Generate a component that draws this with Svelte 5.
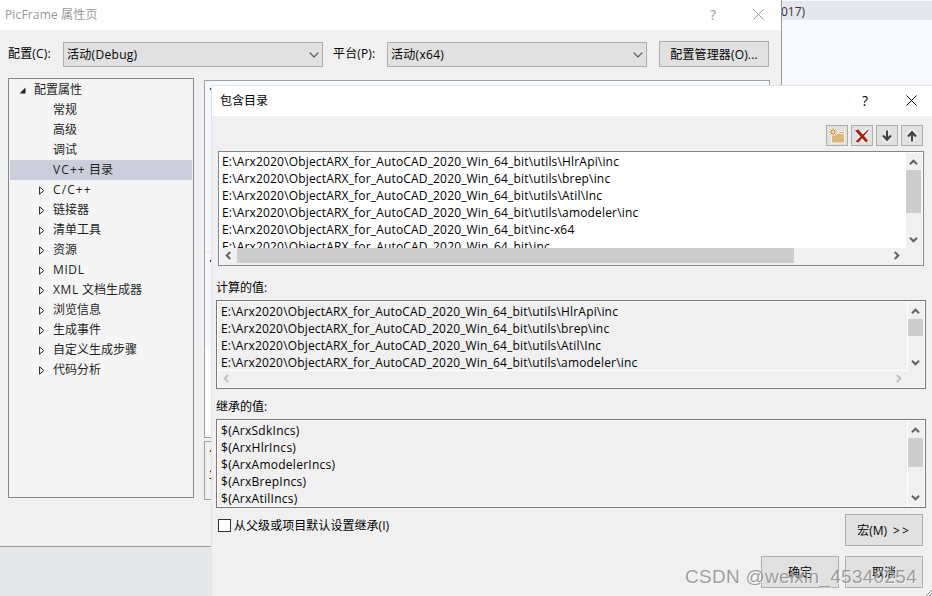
<script>
  const root = 'E:\\Arx2020\\ObjectARX_for_AutoCAD_2020_Win_64_bit\\';

  let selected = 'VC++ 目录';
  let inherit = false;

  const tree = [
    { label: '常规' },
    { label: '高级' },
    { label: '调试' },
    { label: 'VC++ 目录' },
    { label: 'C/C++', children: true },
    { label: '链接器', children: true },
    { label: '清单工具', children: true },
    { label: '资源', children: true },
    { label: 'MIDL', children: true },
    { label: 'XML 文档生成器', children: true },
    { label: '浏览信息', children: true },
    { label: '生成事件', children: true },
    { label: '自定义生成步骤', children: true },
    { label: '代码分析', children: true }
  ];

  const dirs = ['utils\\HlrApi\\inc', 'utils\\brep\\inc', 'utils\\Atil\\Inc', 'utils\\amodeler\\inc', 'inc-x64', 'inc'];
  const inherited = ['$(ArxSdkIncs)', '$(ArxHlrIncs)', '$(ArxAmodelerIncs)', '$(ArxBrepIncs)', '$(ArxAtilIncs)'];

  // latin runs are tracked a little wider than the chinese ones
  function runs(label) {
    return label.split(/([\x21-\x7e]+)/).filter(Boolean);
  }
</script>

{#snippet arrow(dir)}
  <svg class="arrow {dir}" width="9" height="9" viewBox="0 0 9 9">
    <path d="M1 6.2 L4.5 2.7 L8 6.2" fill="none" stroke="currentColor" stroke-width="2" />
  </svg>
{/snippet}

{#snippet chevron()}
  <svg width="10" height="6" viewBox="0 0 10 6">
    <path d="M0.7 0.7 L5 5 L9.3 0.7" fill="none" stroke="#505050" stroke-width="1.2" />
  </svg>
{/snippet}

{#snippet cross()}
  <svg class="close" width="11" height="11" viewBox="0 0 11 11">
    <path d="M0.5 0.5 L10.5 10.5 M10.5 0.5 L0.5 10.5" stroke="currentColor" />
  </svg>
{/snippet}

{#snippet vbar(size)}
  <div class="vbar">
    <span class="cap">{@render arrow('up')}</span>
    <div class="thumb" style="height: {size}px"></div>
    <span class="cap end">{@render arrow('down')}</span>
  </div>
{/snippet}

<main class="desktop">
  <div class="editor"><div class="editor-tab">017)</div></div>

  <section class="window pages">
    <header class="titlebar inactive">
      <span class="title">PicFrame 属性页</span>
      <span class="help">?</span>
      {@render cross()}
    </header>

    <div class="config">
      <span class="caption">配置(C):</span>
      <div class="combo"><span>活动(Debug)</span>{@render chevron()}</div>
      <span class="caption second">平台(P):</span>
      <div class="combo"><span>活动(x64)</span>{@render chevron()}</div>
      <button class="manager">配置管理器(O)...</button>
    </div>

    <div class="content">
      <ul class="tree">
        <li class="root">
          <svg width="7" height="7" viewBox="0 0 7 7"><path d="M6.5 0.5 V6.5 H0.5 Z" fill="#222" /></svg>
          <span class="label">配置属性</span>
        </li>
        {#each tree as item (item.label)}
          <li class:selected={item.label === selected}>
            <span class="expander">
              {#if item.children}
                <svg width="6" height="9" viewBox="0 0 6 9"><path d="M0.6 0.8 L4.8 4.5 L0.6 8.2 Z" fill="#fff" stroke="#222" /></svg>
              {/if}
            </span>
            <span class="label">{#each runs(item.label) as run}<span class:latin={/^\w/.test(run)} class:plus={run.includes('+')}>{run}</span>{/each}</span>
          </li>
        {/each}
      </ul>
      <div class="side">
        <div class="grid">
          <div class="category"><i></i></div>
          <div class="category short"><i></i></div>
        </div>
        <div class="description">包含目录<br />生成</div>
      </div>
    </div>
  </section>

  <section class="window include">
    <header class="titlebar">
      <span class="title">包含目录</span>
      <span class="help">?</span>
      {@render cross()}
    </header>

    <div class="toolbar">
      <button aria-label="新行">
        <svg width="16" height="16" viewBox="0 0 16 16">
          <path d="M2.5 5.5 H9.5 L10.5 3.5 H15.5 V15 H2.5 Z" fill="#dcb67a" stroke="#f7f3ea" />
          <path d="M10.5 5.5 H14.5" stroke="#f7ead2" />
          <circle cx="4" cy="4" r="4" fill="#f3eee5" />
          <path d="M4 0.5 V7.5 M0.5 4 H7.5 M1.5 1.5 L6.5 6.5 M6.5 1.5 L1.5 6.5" stroke="#c27d1a" />
          <circle cx="4" cy="4" r="1" fill="#fff" />
        </svg>
      </button>
      <button aria-label="删除">
        <svg width="16" height="16" viewBox="0 0 16 16">
          <path d="M3 3 L13 14 M14 2 L2.5 14" stroke="#f6f6f6" stroke-width="5" />
          <path d="M1 2.5 L4.5 1.5 L14 12.5 L12 14.5 Z M14 1.5 L14.5 2.5 L4.5 14.5 L1.5 13.5 Z" fill="#a1260d" />
        </svg>
      </button>
      <button aria-label="下移">
        <svg width="16" height="16" viewBox="0 0 16 16">
          <path d="M8 2 V12 M4 8 L8 12 L12 8" fill="none" stroke="#f6f6f6" stroke-width="5" />
          <path d="M8 2.5 V12 M4 7.5 L8 11.8 L12 7.5" fill="none" stroke="#424242" stroke-width="2.2" />
        </svg>
      </button>
      <button aria-label="上移">
        <svg width="16" height="16" viewBox="0 0 16 16">
          <path d="M8 14 V4 M4 8 L8 4 L12 8" fill="none" stroke="#f6f6f6" stroke-width="5" />
          <path d="M8 13.5 V4 M4 8.5 L8 4.2 L12 8.5" fill="none" stroke="#424242" stroke-width="2.2" />
        </svg>
      </button>
    </div>

    <div class="list editable">
      <div class="rows">
        {#each dirs as dir}<p>{root}{dir}</p>{/each}
      </div>
      {@render vbar(43)}
      <div class="hbar">
        <span class="cap">{@render arrow('left')}</span>
        <div class="hthumb"></div>
        <span class="cap end">{@render arrow('right')}</span>
      </div>
    </div>

    <h2>计算的值:</h2>
    <div class="list computed">
      <div class="rows">
        {#each dirs.slice(0, 4) as dir}<p>{root}{dir}</p>{/each}
      </div>
      {@render vbar(17)}
      <div class="hbar disabled">
        <span class="cap">{@render arrow('left')}</span>
        <span class="cap end">{@render arrow('right')}</span>
      </div>
    </div>

    <h2>继承的值:</h2>
    <div class="list inherited">
      <div class="rows">
        {#each inherited as value}<p>{value}</p>{/each}
      </div>
      {@render vbar(29)}
    </div>

    <div class="options">
      <label><input type="checkbox" bind:checked={inherit} />从父级或项目默认设置继承(I)</label>
      <button>宏(M)<span class="more">&gt;&gt;</span></button>
    </div>
    <footer>
      <button>确定</button>
      <button>取消</button>
    </footer>
    <svg class="grip" width="6" height="6" viewBox="0 0 6 6"><path d="M0 6 L6 0 M3 6 L6 3" stroke="#8c8c8c" /></svg>
  </section>

  <div class="watermark">CSDN @weixin_45340254</div>
</main>

<style>
  :global(body) { margin: 0; overflow: hidden; }
  .desktop { position: relative; width: 932px; height: 596px; overflow: hidden; background: #e6e7e9; color: #000; font: 12px/17px "Open Sans", "Noto Sans CJK SC", sans-serif; }
  .desktop :global(*) { box-sizing: border-box; }
  svg { display: block; flex: none; }
  p, h2, ul { margin: 0; padding: 0; font-weight: normal; font-size: 12px; }
  button { padding: 0; border: 1px solid #adadad; background: #e1e1e1; color: #000; font: inherit; border-radius: 0; }

  .editor { position: absolute; left: 782px; top: 0; width: 150px; height: 86px; padding-top: 1px; background: #f7f9fe; }
  .editor-tab { height: 19px; line-height: 21px; background: #e6e7ee; color: #333; margin-left: -1px; }

  .window { position: absolute; background: #f0f0f0; }
  .titlebar { display: flex; align-items: center; height: 30px; background: #fff; }
  .title { flex: 1; padding-bottom: 2px; }
  .help { width: 8px; margin-right: 36px; padding-bottom: 2px; font-size: 14px; text-align: center; }
  .close { margin-bottom: 2px; }
  .inactive { color: #999; }

  .pages { left: 0; top: 0; width: 782px; height: 547px; border: solid #999; border-width: 0 1px 1px 0; }
  .pages .titlebar { padding: 0 17px 0 5px; }
  .pages .title { letter-spacing: 0.15px; }
  .config { display: flex; height: 48px; padding: 11px 12px 0 8px; }
  .caption { width: 55px; padding-top: 4px; white-space: nowrap; letter-spacing: 0.15px; }
  .caption.second { width: 54px; margin-left: 10px; }
  .combo { display: flex; align-items: center; justify-content: space-between; width: 260px; height: 25px; margin-top: 1px; padding: 0 3px; border: 1px solid #adadad; background: #e1e1e1; letter-spacing: 0.3px; }
  .manager { width: 110px; height: 26px; margin-left: 12px; letter-spacing: 0.15px; }
  .content { display: flex; gap: 10px; padding-left: 8px; }
  .tree { width: 186px; height: 420px; padding: 1px; border: 1px solid #828790; background: #f5f5f5; list-style: none; color: #1e1e1e; }
  .tree li { display: flex; align-items: center; height: 20px; padding-left: 29px; }
  .tree .root { gap: 8px; padding-left: 9px; }
  .tree .selected { background: #cccedb; }
  .label { padding-bottom: 2px; white-space: pre; }
  .latin { letter-spacing: 0.6px; }
  .latin.plus { letter-spacing: 1.1px; }
  .expander { width: 14px; }
  .side { padding-top: 2px; }
  .grid { width: 566px; height: 358px; border: 1px solid #a0a0a0; background: #fff; }
  .category { height: 172px; padding: 7px 0 0 5px; background: #f5f8fe; border-bottom: 1px solid #e6e8ee; }
  .category.short { height: 95px; border-bottom: 0; }
  .category i { display: block; width: 4px; height: 2px; background: #333; }
  .description { width: 566px; height: 59px; margin-top: 3px; padding: 2px 4px; border: 1px solid #a0a0a0; line-height: 20px; }

  .include { left: 211px; top: 85px; width: 721px; height: 511px; border: solid #e0e3e8; border-width: 1px 0 0 1px; }
  .include .titlebar { padding: 0 15px 0 8px; }
  .include .help { margin-right: 37px; }
  .toolbar { display: flex; justify-content: flex-end; gap: 3px; height: 35px; padding: 9px 9px 0 0; }
  .toolbar button { display: grid; place-items: center; width: 22px; height: 21px; }

  .list { display: grid; grid-template-columns: 1fr 16px; margin-left: 4px; width: 710px; height: 89px; padding: 1px; border: 1px solid #7a7a7a; background: #fff; letter-spacing: 0.17px; }
  .rows { overflow: hidden; background: #f0f0f0; padding: 1px 0 0 3px; white-space: nowrap; }
  .computed { grid-template-rows: 69px 16px; }
  .computed .rows, .inherited .rows { margin-right: 1px; }
  .computed .rows { margin-bottom: 1px; }
  .inherited { letter-spacing: 0.27px; }
  .editable { grid-template-rows: 95px 17px; margin-left: 6px; width: 706px; height: 115px; border-color: #828790; }
  .editable .rows { padding: 0 0 0 2px; background: #fff; }
  .vbar { display: flex; flex-direction: column; background: #f0f0f0; padding-right: 1px; }
  .cap { display: grid; place-items: center; width: 17px; color: #606060; }
  .vbar .cap { width: 15px; height: 17px; padding-top: 1px; }
  .vbar .end { margin-top: auto; padding: 0 0 1px; }
  .thumb { width: 15px; background: #cdcdcd; }
  .hbar { grid-column: 1 / 3; display: flex; background: #f0f0f0; padding-right: 17px; }
  .hbar .cap { height: 15px; }
  .hbar .end { margin-left: auto; }
  .hthumb { width: 557px; height: 15px; background: #cdcdcd; }
  .disabled .cap { color: #bfbfbf; }
  .down { transform: rotate(180deg); }
  .left { transform: rotate(-90deg); }
  .right { transform: rotate(90deg); }

  h2 { height: 34px; padding: 13px 0 0 4px; }
  .computed + h2 { height: 30px; padding-top: 9px; }
  .options { display: flex; justify-content: space-between; height: 48px; padding: 6px 9px 0 6px; }
  .options label { display: flex; gap: 3px; height: 23px; align-items: center; letter-spacing: 0.05px; }
  .options input { appearance: none; width: 13px; height: 13px; margin: 0; border: 1px solid #333; background: #fff; }
  .options button, footer button { width: 78px; height: 32px; }
  .more { margin-left: 6px; letter-spacing: 2px; }
  footer { display: flex; justify-content: flex-end; gap: 6px; padding-right: 9px; }
  .grip { position: absolute; right: 0; bottom: 0; }
  .watermark { position: absolute; left: 685px; top: 566px; font: 19px/22px "Liberation Sans", sans-serif; letter-spacing: 0.27px; color: rgba(130, 130, 130, 0.75); text-shadow: 1px 1px 0 rgba(255, 255, 255, 0.6); white-space: nowrap; }
</style>
